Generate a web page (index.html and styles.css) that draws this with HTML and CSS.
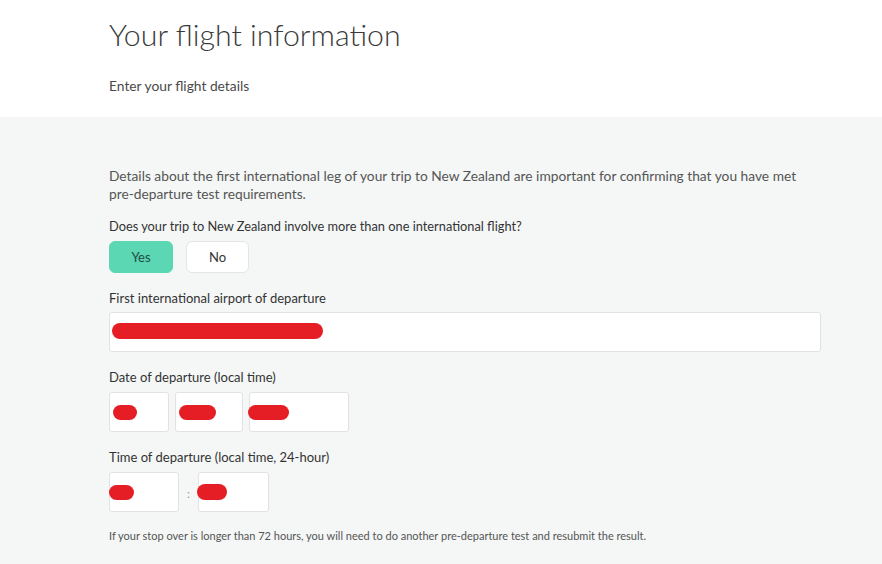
FILE: index.html
```html
<!DOCTYPE html>
<html lang="en">
<head>
<meta charset="utf-8">
<title>Your flight information</title>
<link rel="stylesheet" href="styles.css">
</head>
<body>
<header class="head">
  <h1 class="title">Your flight information</h1>
  <p class="subtitle">Enter your flight details</p>
</header>
<main class="section">
  <p class="intro">Details about the first international leg of your trip to New Zealand are important for confirming that you have met pre-departure test requirements.</p>
  <p class="question">Does your trip to New Zealand involve more than one international flight?</p>
  <div class="choices">
    <button class="choice choice-yes" type="button">Yes</button>
    <button class="choice choice-no" type="button">No</button>
  </div>
  <p class="label">First international airport of departure</p>
  <div class="field field-wide"><span class="redact r-airport"></span></div>
  <p class="label">Date of departure (local time)</p>
  <div class="row">
    <div class="field f-day"><span class="redact r-day"></span></div>
    <div class="field f-month"><span class="redact r-month"></span></div>
    <div class="field f-year"><span class="redact r-year"></span></div>
  </div>
  <p class="label">Time of departure (local time, 24-hour)</p>
  <div class="row row-time">
    <div class="field f-hour"><span class="redact r-hour"></span></div>
    <span class="colon">:</span>
    <div class="field f-min"><span class="redact r-min"></span></div>
  </div>
  <p class="note">If your stop over is longer than 72 hours, you will need to do another pre-departure test and resubmit the result.</p>
</main>
</body>
</html>
```
FILE: styles.css
```css
* { box-sizing: border-box; }
html, body { margin: 0; height: 100%; }
body {
  font-family: "Lato", "Open Sans", sans-serif;
  color: #3d3d3d;
  background: #f4f7f6;
}
.head {
  background: #ffffff;
  height: 117px;
  padding: 16px 0 0 109px;
}
.title {
  margin: 0;
  font-size: 30.3px;
  line-height: 36px;
  font-weight: 300;
  color: #3a3a3a;
}
.subtitle {
  margin: 25px 0 0;
  font-size: 13.8px;
  line-height: 18px;
  color: #4a4a4a;
}
.section {
  background: #f4f7f6;
  padding: 50px 61px 20px 109px;
}
.intro {
  margin: 0;
  font-size: 13.75px;
  line-height: 18px;
  color: #555;
  max-width: 700px;
}
.question {
  margin: 14px 0 0;
  font-size: 12.8px;
  line-height: 18px;
  color: #333;
}
.choices {
  display: flex;
  gap: 13px;
  margin-top: 6px;
}
.choice {
  height: 32px;
  border-radius: 6px;
  font-family: inherit;
  font-size: 13px;
  padding: 0;
  cursor: pointer;
}
.choice-yes {
  width: 64px;
  background: #5bd7b4;
  border: 1px solid #5bd7b4;
  color: #1f4d40;
}
.choice-no {
  width: 63px;
  background: #ffffff;
  border: 1px solid #e5e5e5;
  color: #333;
}
.label {
  margin: 16px 0 0;
  font-size: 13px;
  line-height: 18px;
  color: #333;
}
.field {
  height: 40px;
  background: #ffffff;
  border: 1px solid #e2e2e2;
  border-radius: 3px;
  display: flex;
  align-items: center;
}
.field-wide { margin-top: 5px; width: 712px; }
.row {
  display: flex;
  align-items: center;
  gap: 6px;
  margin-top: 6px;
}
.f-day { width: 60px; }
.f-month { width: 68px; }
.f-year { width: 100px; }
.row-time { gap: 0; }
.f-hour { width: 70px; }
.f-min { width: 71px; }
.colon {
  width: 19px;
  text-align: center;
  font-size: 12px;
  color: #999;
  padding-top: 2px;
}
.redact {
  display: block;
  height: 15px;
  border-radius: 8px;
  background: #e41e24;
}
.r-airport { width: 211px; margin-left: 2px; height: 16px; margin-top: -2px; }
.r-day { width: 24px; margin-left: 3px; }
.r-month { width: 37px; margin-left: 3px; }
.r-year { width: 41px; margin-left: -2px; }
.r-hour { width: 25px; margin-left: -1px; }
.r-min { width: 30px; margin-left: -2px; height: 16px; }
.note {
  margin: 17px 0 0;
  font-size: 11px;
  line-height: 14px;
  color: #555;
}
```
